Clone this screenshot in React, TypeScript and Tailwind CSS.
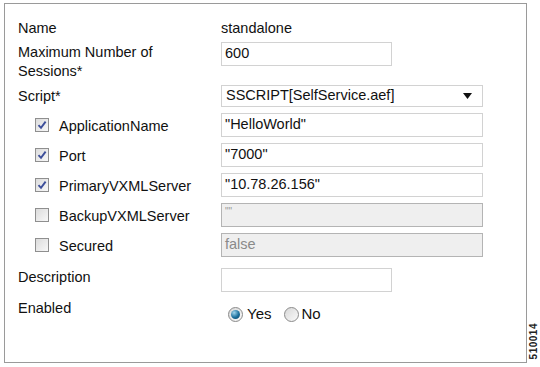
import React from 'react';

const font = { fontFamily: '"Liberation Sans", Arial, sans-serif' };

function TextBox({ value, wide = true, disabled = false, dim = false }: { value: string; wide?: boolean; disabled?: boolean; dim?: boolean }) {
  return (
    <div
      className={`${wide ? 'w-[262px]' : 'w-[171px]'} h-[24px] flex items-center px-[3px] border ${
        disabled ? 'bg-[#efefef] border-[#b4b4b4] text-[#8a8a8a]' : 'bg-white border-[#d2d2d2] text-[#111]'
      }`}
    >
      <span className={dim ? 'text-[10px] -mt-[8px] text-[#999]' : ''}>{value}</span>
    </div>
  );
}

function Check({ checked }: { checked: boolean }) {
  return (
    <div className="w-[14px] h-[14px] border border-[#8f8f8f] bg-gradient-to-br from-[#dcdcdc] to-[#f8f8f8] flex items-center justify-center">
      {checked && (
        <svg width="10" height="10" viewBox="0 0 10 10">
          <path d="M1.5 5.2 L4 7.8 L8.6 1.6" fill="none" stroke="#3d4f9a" strokeWidth="1.9" />
        </svg>
      )}
    </div>
  );
}

function Radio({ checked }: { checked: boolean }) {
  return (
    <div className="w-[15px] h-[15px] rounded-full border border-[#8a8a8a] bg-gradient-to-br from-[#d8d8d8] to-[#fafafa] flex items-center justify-center">
      {checked && <div className="w-[9px] h-[9px] rounded-full bg-[radial-gradient(circle_at_35%_30%,#9fd4ec,#1b6f9c_55%,#0b3f5f)]" />}
    </div>
  );
}

const params = [
  { label: 'ApplicationName', value: '"HelloWorld"', checked: true },
  { label: 'Port', value: '"7000"', checked: true },
  { label: 'PrimaryVXMLServer', value: '"10.78.26.156"', checked: true },
  { label: 'BackupVXMLServer', value: '""', checked: false },
  { label: 'Secured', value: 'false', checked: false },
];

export default function App() {
  return (
    <div className="w-[540px] h-[367px] bg-white flex pt-[3px] pl-[4px] text-[14.5px] text-[#111]" style={font}>
      <div className="w-[523px] h-[360px] border border-[#9a9a9a] pl-[13px] pt-[15px] flex flex-col">
        <div className="flex items-center h-[20px]">
          <div className="w-[203px]">Name</div>
          <div>standalone</div>
        </div>

        <div className="flex items-start mt-[3px]">
          <div className="w-[203px] leading-[19px] translate-y-[1px]">
            Maximum Number of
            <br />
            Sessions*
          </div>
          <TextBox value="600" wide={false} />
        </div>

        <div className="flex items-center mt-[5px]">
          <div className="w-[203px] translate-y-[1px]">Script*</div>
          <div className="w-[262px] h-[22px] border border-[#d2d2d2] flex items-center justify-between pl-[4px] pr-[10px]">
            <span>SSCRIPT[SelfService.aef]</span>
            <svg width="9" height="6" viewBox="0 0 9 6">
              <path d="M0 0 H9 L4.5 6 Z" fill="#111" />
            </svg>
          </div>
        </div>

        <div className="flex flex-col gap-[6px] mt-[6px]">
          {params.map((p, i) => (
            <div key={p.label} className="flex items-center">
              <div className="w-[203px] flex items-center pl-[17px] gap-[10px]">
                <Check checked={p.checked} />
                <span className="translate-y-[2px]">{p.label}</span>
              </div>
              <TextBox value={p.value} disabled={!p.checked} dim={i === 3} />
            </div>
          ))}
        </div>

        <div className="flex items-center mt-[11px]">
          <div className="w-[203px] -translate-y-[2px]">Description</div>
          <TextBox value="" wide={false} />
        </div>

        <div className="flex items-start mt-[5px]">
          <div className="w-[203px] leading-[20px] translate-y-[1px]">Enabled</div>
          <div className="flex items-center pt-[6px] pl-[7px] text-[15px]">
            <Radio checked />
            <span className="ml-[4px]">Yes</span>
            <div className="ml-[13px]">
              <Radio checked={false} />
            </div>
            <span className="ml-[2px]">No</span>
          </div>
        </div>
      </div>
      <div className="w-[13px] flex flex-col justify-end items-center pb-[8px]">
        <span className="[writing-mode:vertical-rl] rotate-180 text-[10px] font-bold tracking-[0.5px] text-[#222]">510014</span>
      </div>
    </div>
  );
}
